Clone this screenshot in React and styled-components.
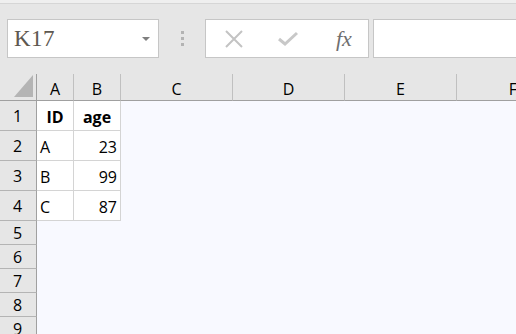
import React from 'react'
import styled, { createGlobalStyle } from 'styled-components'

const GlobalStyle = createGlobalStyle`
  html, body {
    margin: 0;
    padding: 0;
    background: #e6e6e6;
    overflow: hidden;
  }
  body {
    font-family: "Open Sans", "Noto Sans", sans-serif;
  }
`

const COLS = ['A', 'B', 'C', 'D', 'E', 'F']
const COL_WIDTHS = [37, 47, 112, 112, 112, 112]
const ROW_HEIGHTS = [30, 30, 30, 30, 24, 24, 24, 24, 24]

const data = [
  [{ v: 'ID', bold: true, align: 'center' }, { v: 'age', bold: true, align: 'center' }],
  [{ v: 'A' }, { v: '23', align: 'right' }],
  [{ v: 'B' }, { v: '99', align: 'right' }],
  [{ v: 'C' }, { v: '87', align: 'right' }],
]

const Page = styled.div`
  width: 516px;
  height: 334px;
  display: flex;
  flex-direction: column;
  background: #e6e6e6;
  overflow: hidden;
  & > * {
    flex-shrink: 0;
  }
`

const TopStrip = styled.div`
  height: 3px;
  background: #efefef;
  border-bottom: 1px solid #d6d6d6;
`

const Toolbar = styled.div`
  display: flex;
  align-items: center;
  height: 39px;
  margin-top: 15px;
  padding-left: 7px;
`

const NameBox = styled.div`
  box-sizing: border-box;
  width: 152px;
  height: 39px;
  background: #fff;
  border: 1px solid #c6c6c6;
  display: flex;
  align-items: center;
  justify-content: space-between;
  padding: 0 7px 0 6px;
`

const NameText = styled.span`
  font-family: "Liberation Serif", serif;
  font-size: 23px;
  letter-spacing: 0.5px;
  color: #5e5850;
  line-height: 1;
`

const Caret = styled.span`
  width: 0;
  height: 0;
  border-left: 4px solid transparent;
  border-right: 4px solid transparent;
  border-top: 4px solid #7f7f7f;
  margin-right: 1px;
`

const Grip = styled.div`
  width: 46px;
  display: flex;
  flex-direction: column;
  align-items: center;
  gap: 3px;
  span {
    width: 3px;
    height: 3px;
    background: #b3b3b3;
  }
`

const FxBox = styled.div`
  box-sizing: border-box;
  width: 164px;
  height: 39px;
  background: #fff;
  border: 1px solid #c6c6c6;
  display: flex;
  align-items: center;
  padding-left: 18px;
  gap: 33px;
`

const FxLabel = styled.span`
  font-family: "Liberation Serif", serif;
  font-style: italic;
  font-size: 22px;
  color: #6f6f6f;
  margin-left: 4px;
  line-height: 1;
`

const FormulaInput = styled.div`
  box-sizing: border-box;
  flex: 1;
  height: 39px;
  margin-left: 4px;
  background: #fff;
  border: 1px solid #c6c6c6;
  border-right: none;
`

const Grid = styled.div`
  margin-top: 16px;
  display: grid;
  grid-template-columns: 37px ${COL_WIDTHS.map((w) => w + 'px').join(' ')};
  grid-template-rows: 27px ${ROW_HEIGHTS.map((h) => h + 'px').join(' ')};
  background: #f8f9ff;
`

const Corner = styled.div`
  background: #e6e6e6;
  border-right: 1px solid #a0a0a0;
  border-bottom: 1px solid #a0a0a0;
  position: relative;
  &::after {
    content: '';
    position: absolute;
    right: 3px;
    bottom: 3px;
    width: 0;
    height: 0;
    border-left: 19px solid transparent;
    border-bottom: 22px solid #b4b4b4;
  }
`

const ColHead = styled.div`
  box-sizing: border-box;
  background: #e6e6e6;
  border-bottom: 1px solid #a0a0a0;
  border-right: ${(p) => (p.$last ? 'none' : '1px solid #c0c0c0')};
  display: flex;
  align-items: center;
  justify-content: center;
  font-size: 16px;
  color: #000;
  padding-top: 3px;
  white-space: nowrap;
  overflow: hidden;
`

const RowHead = styled.div`
  box-sizing: border-box;
  background: #e6e6e6;
  border-right: 1px solid #a0a0a0;
  border-bottom: 1px solid #b4b4b4;
  display: flex;
  align-items: center;
  justify-content: center;
  font-size: 16px;
  color: #000;
  padding-right: 1px;
  padding-top: 1px;
`

const Cell = styled.div`
  box-sizing: border-box;
  background: ${(p) => (p.$filled ? '#fff' : 'transparent')};
  border-right: ${(p) => (p.$filled ? '1px solid #d4d4d4' : 'none')};
  border-bottom: ${(p) => (p.$filled ? '1px solid #d4d4d4' : 'none')};
  display: flex;
  align-items: center;
  justify-content: ${(p) =>
    p.$align === 'right' ? 'flex-end' : p.$align === 'center' ? 'center' : 'flex-start'};
  padding: 3px 3px 0 3px;
  font-size: 16px;
  font-weight: ${(p) => (p.$bold ? 700 : 400)};
  color: #000;
`

const CrossIcon = () => (
  <svg width="20" height="20" viewBox="0 0 20 20">
    <path d="M2 2 L18 18 M18 2 L2 18" stroke="#c3c3c3" strokeWidth="2" fill="none" />
  </svg>
)

const CheckIcon = () => (
  <svg width="22" height="16" viewBox="0 0 22 16">
    <path d="M2 8 L8 13 L20 2" stroke="#c8c8c8" strokeWidth="3" fill="none" />
  </svg>
)

export default function App() {
  return (
    <>
      <GlobalStyle />
      <Page>
        <TopStrip />
        <Toolbar>
          <NameBox>
            <NameText>K17</NameText>
            <Caret />
          </NameBox>
          <Grip>
            <span />
            <span />
            <span />
          </Grip>
          <FxBox>
            <CrossIcon />
            <CheckIcon />
            <FxLabel>fx</FxLabel>
          </FxBox>
          <FormulaInput />
        </Toolbar>
        <Grid>
          <Corner />
          {COLS.map((c, i) => (
            <ColHead key={c} $last={i === COLS.length - 1}>
              {c}
            </ColHead>
          ))}
          {ROW_HEIGHTS.map((_, r) => (
            <React.Fragment key={r}>
              <RowHead>{r + 1}</RowHead>
              {COLS.map((c, ci) => {
                const cell = data[r] && data[r][ci]
                return (
                  <Cell
                    key={c}
                    $filled={!!cell}
                    $bold={cell && cell.bold}
                    $align={cell && cell.align}
                  >
                    {cell ? cell.v : ''}
                  </Cell>
                )
              })}
            </React.Fragment>
          ))}
        </Grid>
      </Page>
    </>
  )
}
